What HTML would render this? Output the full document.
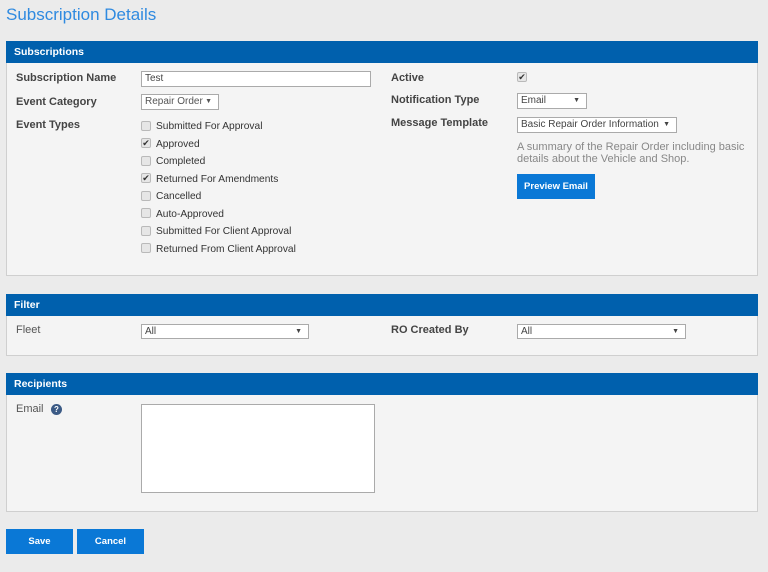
<!DOCTYPE html>
<html><head><style>
body{margin:0;width:768px;height:572px;background:#ebebeb;font-family:"Liberation Sans",sans-serif;position:relative;overflow:hidden}
.a{position:absolute}
h1{position:absolute;left:6px;top:5px;margin:0;font-size:17px;font-weight:normal;color:#2f8ae0}
.p{position:absolute;left:6px;width:752px;background:#f4f4f4;border:1px solid #cfcfcf;box-sizing:border-box}
.h{background:#0060ad;color:#fff;font-weight:bold;font-size:10.5px;height:22px;line-height:22px;padding-left:8px;margin:-1px -1px 0 -1px}
.l{position:absolute;font-size:11px;font-weight:bold;color:#444}
.in{position:absolute;background:#fff;border:1px solid #aaa;box-sizing:border-box;font-size:10px;color:#444;padding-left:3px;line-height:14px;white-space:nowrap}
.in .ar{position:absolute;right:6px;top:0;font-size:7px}
.cb{position:absolute;width:10px;height:10px;border:1px solid #b9b9b9;background:#e6e6e6;border-radius:2px;box-sizing:border-box;font-size:9px;line-height:9px;text-align:center;color:#333}
.t{position:absolute;font-size:10.2px;color:#333}
.btn{position:absolute;background:#0a78d6;color:#fff;font-weight:bold;font-size:9.5px;text-align:center}
</style></head><body>
<h1>Subscription Details</h1>
<div class="p" style="top:41px;height:235px"><div class="h">Subscriptions</div></div>
<div class="p" style="top:294px;height:62px"><div class="h">Filter</div></div>
<div class="p" style="top:373px;height:139px"><div class="h">Recipients</div></div>

<div class="l" style="left:16px;top:72px">Subscription Name</div>
<div class="l" style="left:16px;top:96px">Event Category</div>
<div class="l" style="left:16px;top:119px">Event Types</div>
<div class="in" style="left:141px;top:71px;width:230px;height:16px">Test</div>
<div class="in" style="left:141px;top:94px;width:78px;height:16px;color:#555">Repair Order <span class="ar">▼</span></div>

<div class="cb" style="left:141px;top:121px"></div><div class="t" style="left:156px;top:121px">Submitted For Approval</div>
<div class="cb" style="left:141px;top:138px">✔</div><div class="t" style="left:156px;top:139px">Approved</div>
<div class="cb" style="left:141px;top:156px"></div><div class="t" style="left:156px;top:156px">Completed</div>
<div class="cb" style="left:141px;top:173px">✔</div><div class="t" style="left:156px;top:174px">Returned For Amendments</div>
<div class="cb" style="left:141px;top:191px"></div><div class="t" style="left:156px;top:191px">Cancelled</div>
<div class="cb" style="left:141px;top:208px"></div><div class="t" style="left:156px;top:209px">Auto-Approved</div>
<div class="cb" style="left:141px;top:226px"></div><div class="t" style="left:156px;top:226px">Submitted For Client Approval</div>
<div class="cb" style="left:141px;top:243px"></div><div class="t" style="left:156px;top:244px">Returned From Client Approval</div>

<div class="l" style="left:391px;top:72px">Active</div>
<div class="l" style="left:391px;top:94px">Notification Type</div>
<div class="l" style="left:391px;top:117px">Message Template</div>
<div class="cb" style="left:517px;top:72px">✔</div>
<div class="in" style="left:517px;top:93px;width:70px;height:16px">Email <span class="ar">▼</span></div>
<div class="in" style="left:517px;top:117px;width:160px;height:16px">Basic Repair Order Information <span class="ar">▼</span></div>
<div class="a" style="left:517px;top:141px;width:240px;font-size:11px;color:#888;line-height:12px">A summary of the Repair Order including basic details about the Vehicle and Shop.</div>
<div class="btn" style="left:517px;top:174px;width:78px;height:25px;line-height:25px">Preview Email</div>

<div class="l" style="left:16px;top:324px;font-weight:normal;color:#555">Fleet</div>
<div class="in" style="left:141px;top:324px;width:168px;height:15px">All <span class="ar">▼</span></div>
<div class="l" style="left:391px;top:324px">RO Created By</div>
<div class="in" style="left:517px;top:324px;width:169px;height:15px">All <span class="ar">▼</span></div>

<div class="l" style="left:16px;top:403px;font-weight:normal;color:#555">Email</div>
<div class="a" style="left:51px;top:404px;width:11px;height:11px;border-radius:50%;background:#3b5a85;color:#fff;font-size:8px;font-weight:bold;text-align:center;line-height:11px">?</div>
<div class="in" style="left:141px;top:404px;width:234px;height:89px"></div>

<div class="btn" style="left:6px;top:529px;width:67px;height:25px;line-height:25px">Save</div>
<div class="btn" style="left:77px;top:529px;width:67px;height:25px;line-height:25px">Cancel</div>
</body></html>
